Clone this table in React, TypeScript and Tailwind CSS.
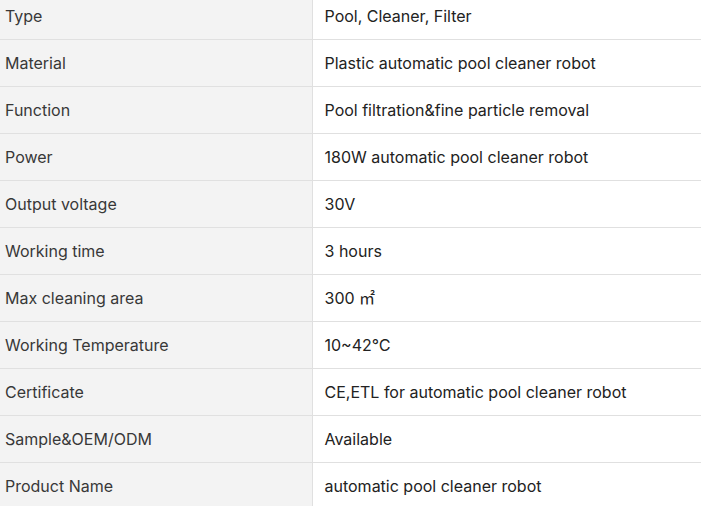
import React from 'react';

const rows: [string, string][] = [
  ['Type', 'Pool, Cleaner, Filter'],
  ['Material', 'Plastic automatic pool cleaner robot'],
  ['Function', 'Pool filtration&fine particle removal'],
  ['Power', '180W automatic pool cleaner robot'],
  ['Output voltage', '30V'],
  ['Working time', '3 hours'],
  ['Max cleaning area', '300 ㎡'],
  ['Working Temperature', '10~42℃'],
  ['Certificate', 'CE,ETL for automatic pool cleaner robot'],
  ['Sample&OEM/ODM', 'Available'],
  ['Product Name', 'automatic pool cleaner robot'],
];

const App: React.FC = () => {
  return (
    <div className="h-[506px] w-[701px] overflow-hidden bg-white font-['Inter','Noto_Sans_CJK_SC',sans-serif] text-[16px]">
      <table className="-mt-[8px] w-[701px] border-collapse">
        <tbody>
          {rows.map(([k, v]) => (
            <tr key={k} className="h-[47px] border-b border-[#e0e0e0]">
              <td className="w-[312px] border-r border-[#e0e0e0] bg-[#f3f3f3] pl-[5px] pt-[1px] text-[#383838]">{k}</td>
              <td className="pl-[12px] pt-[1px] text-[#222]">{v}</td>
            </tr>
          ))}
        </tbody>
      </table>
    </div>
  );
};

export default App;
